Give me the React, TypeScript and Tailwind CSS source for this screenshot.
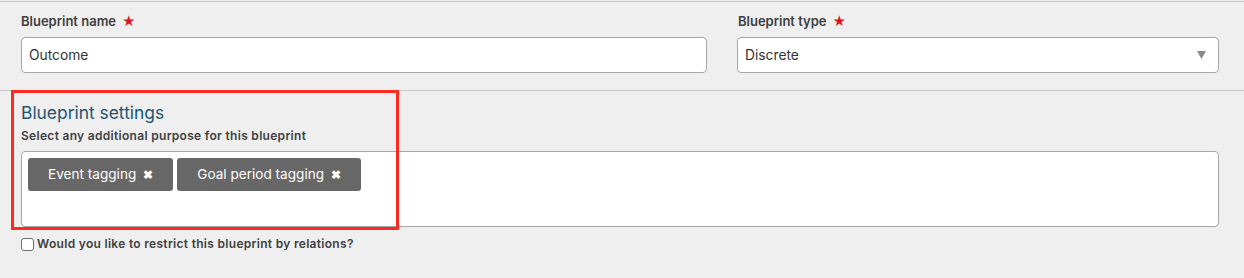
const TAGS = ['Event tagging', 'Goal period tagging'];

function Label({ text }: { text: string }) {
  return (
    <label className="flex h-4 items-center gap-[6px] text-[13px] font-semibold leading-4 text-[#404040]">
      {text}
      <span className="text-[13px] leading-none text-[#e0101e]">★</span>
    </label>
  );
}

export default function App() {
  return (
    <div className="relative h-[278px] w-full bg-[#efefef] pt-px font-['Inter',sans-serif]">
      <section className="grid grid-cols-[686px_482px] gap-[30px] border-t border-[#c6c6c6] px-[21px] pt-[11px] pb-[17px]">
        <div className="flex flex-col gap-[8px]">
          <Label text="Blueprint name" />
          <div className="flex h-9 items-center rounded-[4px] border border-[#a6a6a6] bg-white px-[7px] text-[13.8px] text-[#333]">
            Outcome
          </div>
        </div>
        <div className="flex flex-col gap-[8px]">
          <div className="pl-px">
            <Label text="Blueprint type" />
          </div>
          <div className="flex h-9 items-center justify-between rounded-[4px] border border-[#a6a6a6] bg-white pr-[12px] pl-[7px] text-[13.8px] text-[#333]">
            Discrete
            <svg width="9" height="8" viewBox="0 0 9 8">
              <path d="M0 0 H9 L4.5 8 Z" fill="#8a8a8a" />
            </svg>
          </div>
        </div>
      </section>

      <section className="border-t border-[#c6c6c6] pr-[25px] pl-[21px] pt-[11px]">
        <h2 className="text-[17.4px] leading-[22px] font-normal text-[#1d5573]">Blueprint settings</h2>
        <p className="mt-[5px] text-[12px] leading-[14px] font-semibold tracking-[0.025em] text-[#404040]">
          Select any additional purpose for this blueprint
        </p>
        <div className="mt-[8px] flex h-[76px] items-start gap-[4px] rounded-[4px] border border-[#a6a6a6] bg-white p-[6px]">
          {TAGS.map((tag) => (
            <span
              key={tag}
              className="flex h-[33px] items-center gap-[7px] rounded-[3px] bg-[#676767] px-[20px] text-[13.6px] text-white"
            >
              {tag}
              <span className="text-[12px] font-bold leading-none">✖</span>
            </span>
          ))}
        </div>
        <label className="mt-[10px] flex h-[14px] items-center gap-[3px] text-[12px] font-semibold tracking-[0.025em] text-[#404040]">
          <span className="h-[13px] w-[13px] rounded-[3px] border border-[#6e6e6e] bg-white" />
          Would you like to restrict this blueprint by relations?
        </label>
      </section>

      <div className="pointer-events-none absolute top-[90px] left-[11px] h-[140px] w-[388px] border-[3px] border-[#ff2a1f]" />
    </div>
  );
}
